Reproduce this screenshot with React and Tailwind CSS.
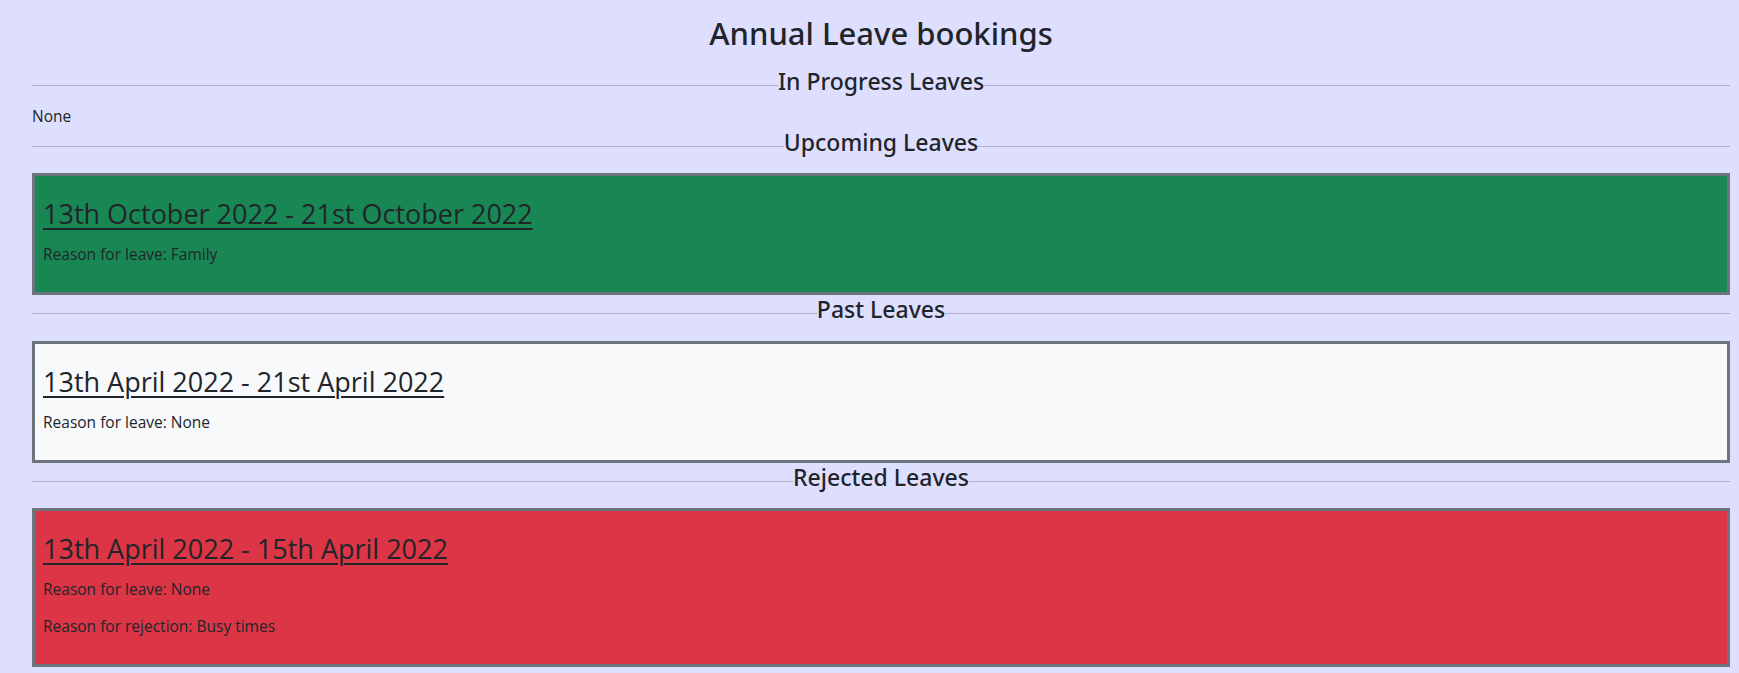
import React from 'react';

const font = { fontFamily: '"Open Sans", "Noto Sans", sans-serif' };
const headFont = { fontFamily: '"Noto Sans", "Open Sans", sans-serif' };

const SectionHeader = ({ title, className = '' }) => (
    <div className={`flex items-start ${className}`}>
        <div className="flex-1 h-px mt-[18px] bg-[#afafca]"></div>
        <h4 className="text-[23px] leading-[29px] font-medium text-[#212529]" style={headFont}>{title}</h4>
        <div className="flex-1 h-px mt-[18px] bg-[#afafca]"></div>
    </div>
);

const LeaveCard = ({ dates, reason, rejection, bg, className = '' }) => (
    <div className={`border-[3px] border-[#6c757d] pl-[8px] pr-2 pt-[21px] pb-[11px] text-[#212529] ${bg} ${className}`}>
        <h3 className="text-[27px] leading-[34px] underline underline-offset-[4px] decoration-[2px] mb-[13px]">{dates}</h3>
        <p className="text-[15.5px] leading-[21px] mb-4">Reason for leave: {reason}</p>
        {rejection && (
            <p className="text-[15.5px] leading-[21px] mb-4">Reason for rejection: {rejection}</p>
        )}
    </div>
);

const App = () => {
    const upcoming = [
        { dates: '13th October 2022 - 21st October 2022', reason: 'Family' }
    ];
    const past = [
        { dates: '13th April 2022 - 21st April 2022', reason: 'None' }
    ];
    const rejected = [
        { dates: '13th April 2022 - 15th April 2022', reason: 'None', rejection: 'Busy times' }
    ];

    return (
        <div className="min-h-screen bg-[#dedeff] pl-[32px] pr-[9px] pt-[14px] pb-4 text-[#212529]" style={font}>
            <h2 className="text-[31px] leading-[38px] font-medium text-center" style={headFont}>Annual Leave bookings</h2>

            <SectionHeader title="In Progress Leaves" className="mt-[15px]" />
            <p className="text-[15.5px] leading-[21px] mt-[10px]">None</p>

            <SectionHeader title="Upcoming Leaves" className="mt-px" />
            {upcoming.map((l, i) => (
                <LeaveCard key={i} {...l} bg="bg-[#198754]" className="mt-4" />
            ))}

            <SectionHeader title="Past Leaves" />
            {past.map((l, i) => (
                <LeaveCard key={i} {...l} bg="bg-[#f8f9fa]" className="mt-[17px]" />
            ))}

            <SectionHeader title="Rejected Leaves" />
            {rejected.map((l, i) => (
                <LeaveCard key={i} {...l} bg="bg-[#dc3545]" className="mt-4" />
            ))}
        </div>
    );
};

export default App;
